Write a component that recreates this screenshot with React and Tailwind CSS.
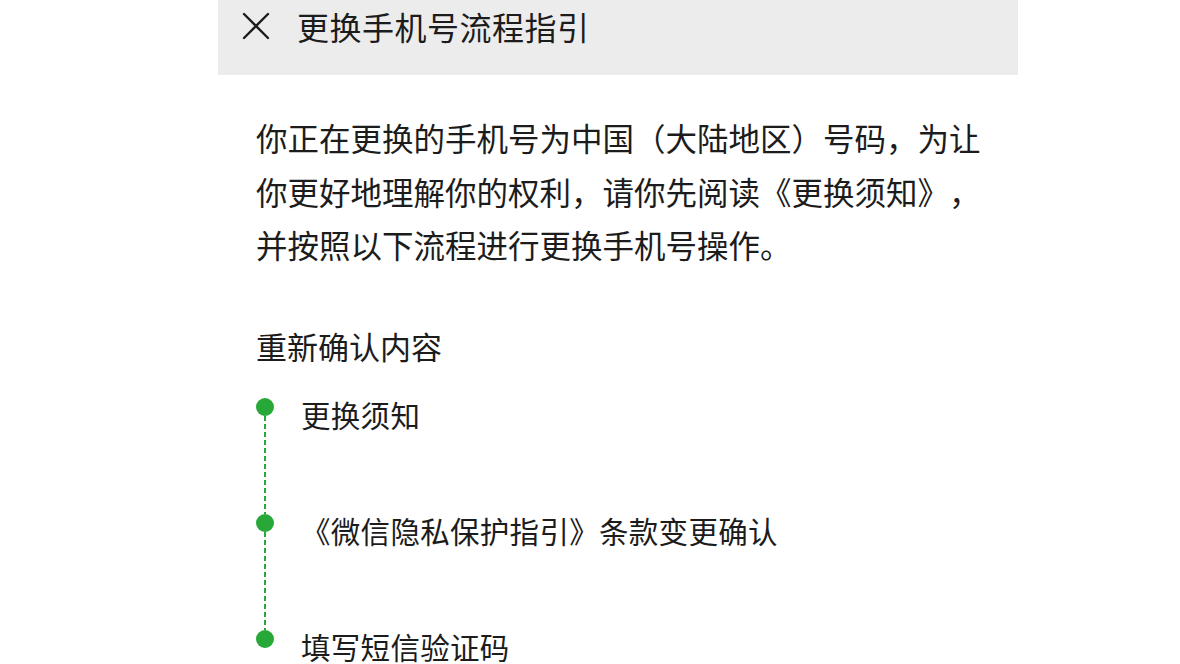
const STEPS = [
  '更换须知',
  '《微信隐私保护指引》条款变更确认',
  '填写短信验证码',
]

export default function App() {
  return (
    <main className="min-h-screen bg-white text-[#1c1c1c] font-['Noto_Sans_CJK_SC','Noto_Sans',sans-serif] [text-spacing-trim:space-all]">
      <div className="ml-[218px] w-[800px]">
        {/* Top bar */}
        <header className="h-[75px] bg-[#ececec] flex items-start pt-[8px] pl-[24px]">
          <div className="h-[36px] flex items-center">
            <svg width="28" height="28" viewBox="0 0 28 28" fill="none" stroke="#1c1c1c" strokeWidth="2.4" strokeLinecap="round">
              <path d="M2 2L26 26M26 2L2 26" />
            </svg>
          </div>
          <h1 className="ml-[27px] text-[32px] leading-[36px] tracking-[0.5px]">更换手机号流程指引</h1>
        </header>

        <div className="pl-[38px] pr-[20px]">
          <p className="mt-[36px] text-[31.5px] leading-[53.5px]">
            你正在更换的手机号为中国（大陆地区）号码，为让你更好地理解你的权利，请你先阅读《更换须知》，并按照以下流程进行更换手机号操作。
          </p>

          <h2 className="mt-[54px] text-[31px] leading-[40px]">重新确认内容</h2>

          {/* Steps timeline */}
          <div className="mt-[32px]">
            {STEPS.map((step, i) => (
              <div key={step} className="flex h-[116px]">
                <div className="w-[18px] flex flex-col items-center">
                  <span className="w-[18px] h-[18px] rounded-full bg-[#27a839] shrink-0" />
                  {i < STEPS.length - 1 && (
                    <span className="w-[2px] flex-1 bg-[repeating-linear-gradient(to_bottom,#27a839_0_5px,transparent_5px_8px)]" />
                  )}
                </div>
                <span className="ml-[27px] -mt-[2px] text-[29.5px] tracking-[0.3px] leading-[36px]">{step}</span>
              </div>
            ))}
          </div>
        </div>
      </div>
    </main>
  )
}
